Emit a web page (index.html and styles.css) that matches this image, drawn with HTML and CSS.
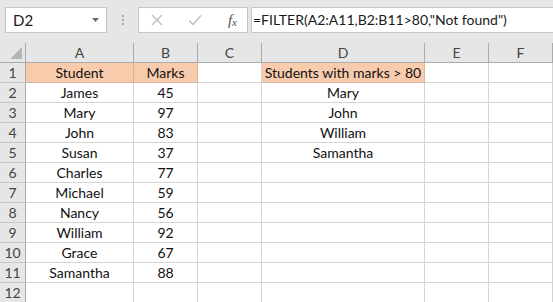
FILE: index.html
```html
<!DOCTYPE html>
<html lang="en">
<head>
  <meta charset="UTF-8">
  <title>FILTER example</title>
  <link rel="stylesheet" href="styles.css">
</head>
<body>
  <div class="toolbar">
    <div class="namebox">
      <span>D2</span>
      <svg class="arrow" width="7" height="4" viewBox="0 0 7 4"><path d="M0 0h7L3.5 4z" fill="#6b6b6b"/></svg>
    </div>
    <div class="dots"><i></i><i></i><i></i></div>
    <div class="buttons">
      <svg width="12" height="12" viewBox="0 0 12 12"><path d="M1 1l10 10M11 1L1 11" stroke="#bdbdbd" stroke-width="1.3"/></svg>
      <svg width="14" height="12" viewBox="0 0 14 12"><path d="M1 6.5l4 4L13 1.5" stroke="#bdbdbd" stroke-width="1.4" fill="none"/></svg>
      <span class="fx">f<sub>x</sub></span>
    </div>
    <div class="formula">=FILTER(A2:A11,B2:B11&gt;80,"Not found")</div>
  </div>

  <div class="sheet">
    <div class="corner"><svg width="12" height="12" viewBox="0 0 12 12"><path d="M12 0v12H0z" fill="#b5b5b5"/></svg></div>
    <div class="colhead">A</div>
    <div class="colhead">B</div>
    <div class="colhead">C</div>
    <div class="colhead">D</div>
    <div class="colhead">E</div>
    <div class="colhead">F</div>

    <div class="rowhead">1</div>
    <div class="cell head">Student</div>
    <div class="cell head">Marks</div>
    <div class="cell"></div>
    <div class="cell head">Students with marks &gt; 80</div>
    <div class="cell"></div>
    <div class="cell"></div>

    <div class="rowhead">2</div>
    <div class="cell">James</div><div class="cell">45</div><div class="cell"></div>
    <div class="cell">Mary</div><div class="cell"></div><div class="cell"></div>

    <div class="rowhead">3</div>
    <div class="cell">Mary</div><div class="cell">97</div><div class="cell"></div>
    <div class="cell">John</div><div class="cell"></div><div class="cell"></div>

    <div class="rowhead">4</div>
    <div class="cell">John</div><div class="cell">83</div><div class="cell"></div>
    <div class="cell">William</div><div class="cell"></div><div class="cell"></div>

    <div class="rowhead">5</div>
    <div class="cell">Susan</div><div class="cell">37</div><div class="cell"></div>
    <div class="cell">Samantha</div><div class="cell"></div><div class="cell"></div>

    <div class="rowhead">6</div>
    <div class="cell">Charles</div><div class="cell">77</div><div class="cell"></div>
    <div class="cell"></div><div class="cell"></div><div class="cell"></div>

    <div class="rowhead">7</div>
    <div class="cell">Michael</div><div class="cell">59</div><div class="cell"></div>
    <div class="cell"></div><div class="cell"></div><div class="cell"></div>

    <div class="rowhead">8</div>
    <div class="cell">Nancy</div><div class="cell">56</div><div class="cell"></div>
    <div class="cell"></div><div class="cell"></div><div class="cell"></div>

    <div class="rowhead">9</div>
    <div class="cell">William</div><div class="cell">92</div><div class="cell"></div>
    <div class="cell"></div><div class="cell"></div><div class="cell"></div>

    <div class="rowhead">10</div>
    <div class="cell">Grace</div><div class="cell">67</div><div class="cell"></div>
    <div class="cell"></div><div class="cell"></div><div class="cell"></div>

    <div class="rowhead">11</div>
    <div class="cell">Samantha</div><div class="cell">88</div><div class="cell"></div>
    <div class="cell"></div><div class="cell"></div><div class="cell"></div>

    <div class="rowhead">12</div>
    <div class="cell"></div><div class="cell"></div><div class="cell"></div>
    <div class="cell"></div><div class="cell"></div><div class="cell"></div>
  </div>
</body>
</html>
```

FILE: styles.css
```css
body {
  margin: 0;
  font-family: Lato, "Open Sans", sans-serif;
  font-size: 14px;
  color: #1a1a1a;
  background: #fff;
  overflow: hidden;
}

.toolbar {
  height: 43px;
  background: #e6e6e6;
  display: flex;
  align-items: flex-start;
  padding-top: 7px;
  padding-left: 5px;
  box-sizing: border-box;
}

.namebox {
  width: 102px;
  height: 26px;
  background: #fff;
  border: 1px solid #c6c6c6;
  box-sizing: border-box;
  display: flex;
  align-items: center;
  justify-content: space-between;
  padding: 0 7px 0 7px;
  font-size: 15px;
}

.dots {
  width: 31px;
  height: 26px;
  display: flex;
  flex-direction: column;
  align-items: center;
  justify-content: center;
  gap: 2px;
}

.dots i {
  width: 2px;
  height: 2px;
  background: #a8a8a8;
}

.buttons {
  width: 110px;
  height: 26px;
  background: #fff;
  border: 1px solid #c6c6c6;
  box-sizing: border-box;
  display: flex;
  align-items: center;
  padding: 0 10px 0 12px;
  justify-content: space-between;
}

.fx {
  font-family: "Liberation Serif", serif;
  font-style: italic;
  font-size: 15px;
  color: #555;
  line-height: 1;
}

.fx sub {
  font-size: 11px;
  vertical-align: -1px;
}

.formula {
  margin-left: 3px;
  flex: 1;
  height: 26px;
  background: #fff;
  border: 1px solid #c6c6c6;
  border-right: none;
  box-sizing: border-box;
  padding-left: 1px;
  line-height: 24px;
  font-size: 14px;
  white-space: nowrap;
}

.sheet {
  display: grid;
  grid-template-columns: 26px 108px 64px 64px 163px 64px 64px;
  grid-auto-rows: 20px;
}

.sheet > div {
  box-sizing: border-box;
  display: flex;
  align-items: center;
  justify-content: center;
}

.corner {
  background: #e6e6e6;
  border-right: 1px solid #ababab;
  border-bottom: 1px solid #ababab;
  align-items: flex-end !important;
  justify-content: flex-end !important;
  padding: 0 3px 3px 0;
}

.colhead {
  background: #e6e6e6;
  border-right: 1px solid #ababab;
  border-bottom: 1px solid #ababab;
  color: #444;
}

.rowhead {
  background: #e6e6e6;
  border-right: 1px solid #ababab;
  border-bottom: 1px solid #c8c8c8;
  color: #444;
}

.cell {
  border-right: 1px solid #d4d4d4;
  border-bottom: 1px solid #d4d4d4;
  color: #111;
}

.cell.head {
  background: #f8cbad;
  border-color: #d6b59c;
}
```
